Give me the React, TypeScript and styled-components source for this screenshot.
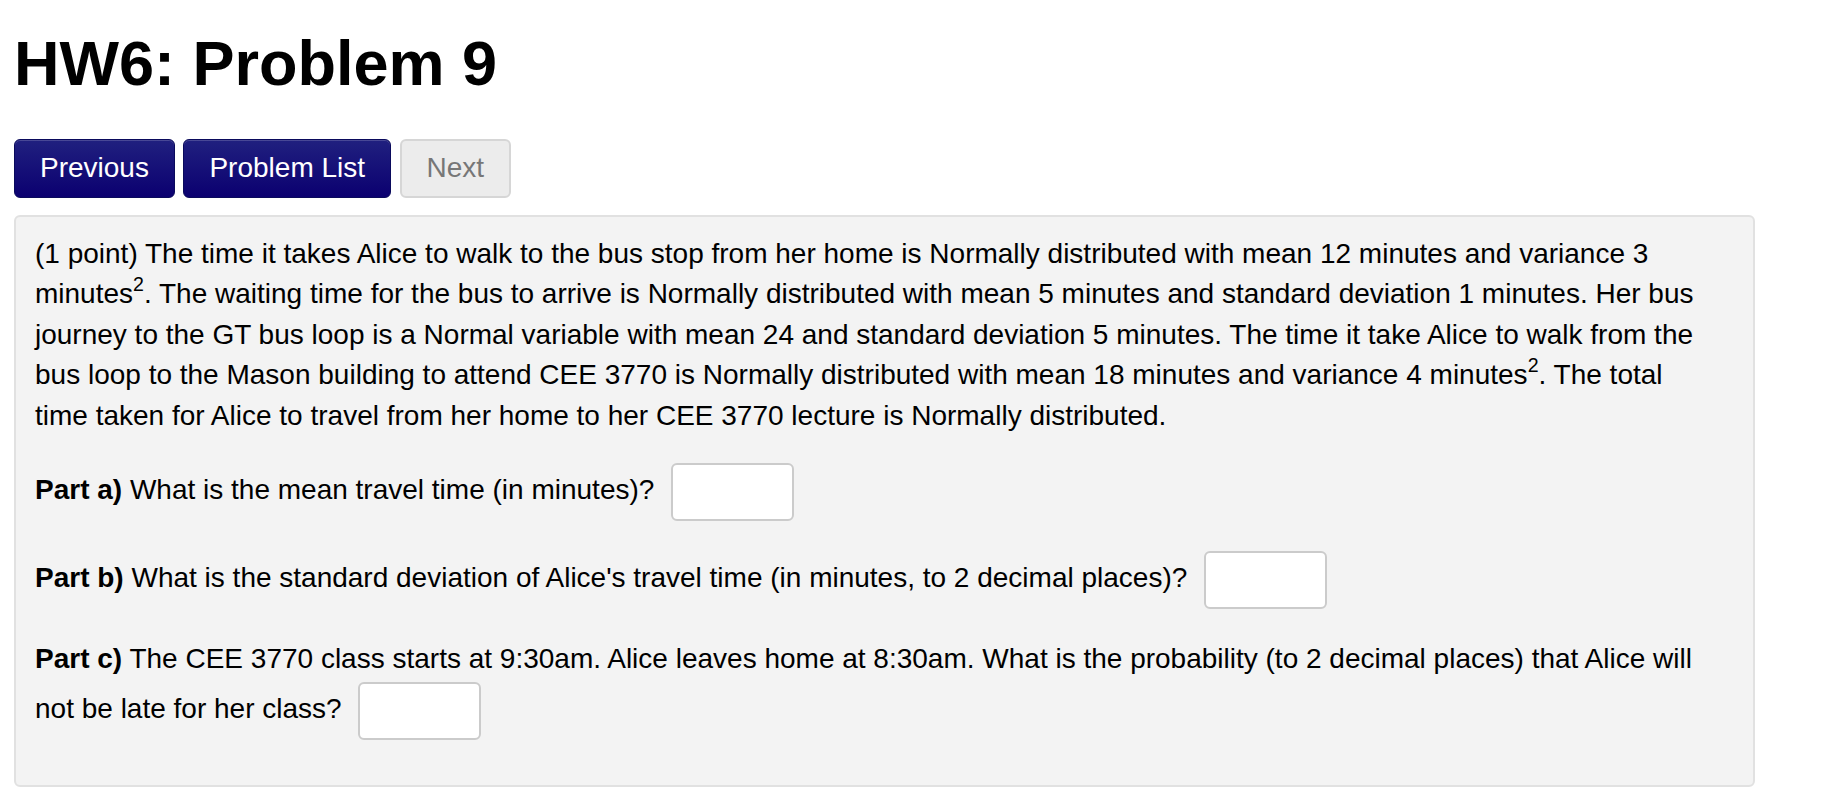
import React from "react";
import styled, { createGlobalStyle } from "styled-components";

const GlobalStyle = createGlobalStyle`
  html, body {
    margin: 0;
    padding: 0;
    background: #ffffff;
  }
  body {
    font-family: "Liberation Sans", Arial, Helvetica, sans-serif;
    color: #000000;
  }
`;

const Page = styled.div`
  padding: 32px 67px 0 14px;
`;

const Title = styled.h1`
  margin: 0;
  font-size: 63px;
  line-height: 63px;
  font-weight: 700;
`;

const Nav = styled.div`
  display: flex;
  gap: 8.5px;
  margin-top: 43.5px;
`;

const NavButton = styled.button<{ $disabled?: boolean }>`
  height: 59px;
  padding: 0 25px;
  font-family: inherit;
  font-size: 28px;
  border-radius: 6px;
  cursor: ${(p) => (p.$disabled ? "default" : "pointer")};
  color: ${(p) => (p.$disabled ? "#777777" : "#ffffff")};
  background: ${(p) =>
    p.$disabled ? "#ececec" : "linear-gradient(#20207f, #0b0070)"};
  border: ${(p) => (p.$disabled ? "2px solid #d6d6d6" : "1px solid #0a0a5c")};
  box-shadow: ${(p) =>
    p.$disabled ? "none" : "inset 0 1px 0 rgba(255, 255, 255, 0.18)"};
`;

const Panel = styled.div`
  margin-top: 17px;
  background: #f3f3f3;
  border: 2px solid #e1e1e1;
  border-radius: 6px;
  padding: 17px 44px 43px 19px;
  font-size: 28px;
  line-height: 40.5px;
`;

const Intro = styled.div``;

const PartLine = styled.div<{ $gap: number }>`
  margin-top: ${(p) => p.$gap}px;
`;

const Sup = styled.sup`
  font-size: 0.7em;
  line-height: 0;
  vertical-align: 0.62em;
`;

const Answer = styled.input.attrs({ type: "text" })`
  box-sizing: border-box;
  width: 123px;
  height: 58px;
  margin: 2px 0 2px 9px;
  vertical-align: middle;
  background: #ffffff;
  border: 2px solid #cbcbcb;
  border-radius: 6px;
  font-family: inherit;
  font-size: 24px;
  padding: 0 8px;
`;

export default function App() {
  return (
    <>
      <GlobalStyle />
      <Page>
        <Title>HW6: Problem 9</Title>
        <Nav>
          <NavButton>Previous</NavButton>
          <NavButton>Problem List</NavButton>
          <NavButton $disabled>Next</NavButton>
        </Nav>
        <Panel>
          <Intro>
            (1 point) The time it takes Alice to walk to the bus stop from her
            home is Normally distributed with mean 12 minutes and variance 3
            minutes<Sup>2</Sup>. The waiting time for the bus to arrive is
            Normally distributed with mean 5 minutes and standard deviation 1
            minutes. Her bus journey to the GT bus loop is a Normal variable
            with mean 24 and standard deviation 5 minutes. The time it take
            Alice to walk from the bus loop to the Mason building to attend CEE
            3770 is Normally distributed with mean 18 minutes and variance 4
            minutes<Sup>2</Sup>. The total time taken for Alice to travel from
            her home to her CEE 3770 lecture is Normally distributed.
          </Intro>
          <PartLine $gap={25}>
            <b>Part a)</b> What is the mean travel time (in minutes)? <Answer />
          </PartLine>
          <PartLine $gap={26}>
            <b>Part b)</b> What is the standard deviation of Alice's travel time
            (in minutes, to 2 decimal places)? <Answer />
          </PartLine>
          <PartLine $gap={28}>
            <b>Part c)</b> The CEE 3770 class starts at 9:30am. Alice leaves
            home at 8:30am. What is the probability (to 2 decimal places) that
            Alice will not be late for her class? <Answer />
          </PartLine>
        </Panel>
      </Page>
    </>
  );
}
